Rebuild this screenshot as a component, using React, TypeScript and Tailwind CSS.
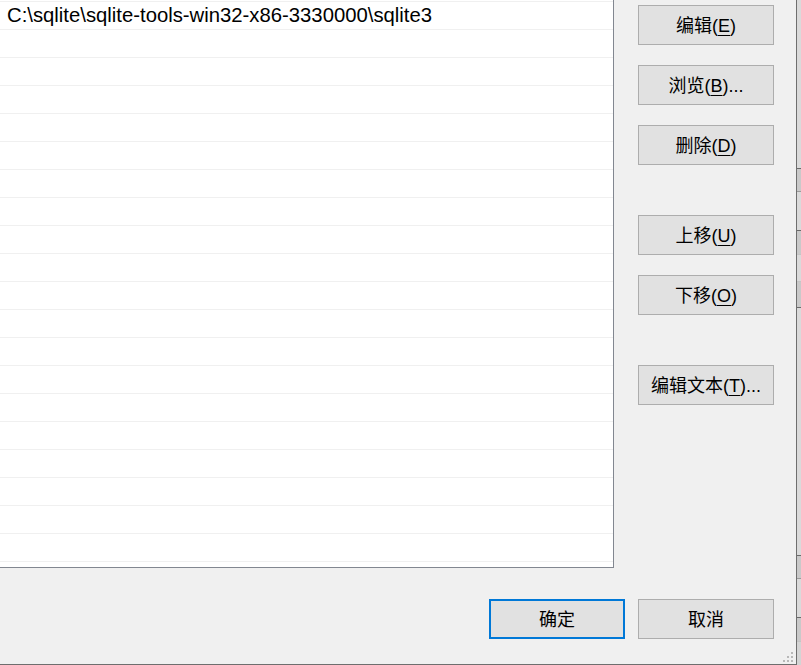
import type { ReactNode } from "react";

const font = "font-['Liberation_Sans','Noto_Sans_CJK_SC',sans-serif]";

const paths = ["C:\\sqlite\\sqlite-tools-win32-x86-3330000\\sqlite3"];

function Btn({
  children,
  focused = false,
}: {
  children: ReactNode;
  focused?: boolean;
}) {
  return (
    <button
      className={
        focused
          ? "w-[136px] h-[40px] pt-px flex items-center justify-center bg-[#e1e1e1] border-2 border-[#0078d7] text-[18px] text-black leading-none"
          : "w-[136px] h-[40px] pt-px flex items-center justify-center bg-[#e1e1e1] border border-[#adadad] text-[18px] text-black leading-none"
      }
    >
      {children}
    </button>
  );
}

function Key({ k }: { k: string }) {
  return (
    <>
      (<span className="underline underline-offset-[3px] decoration-1">{k}</span>)
    </>
  );
}

// the side of the window behind the dialog
const strip = [
  { h: 169, c: "border-[#6a6a6a]" },
  { h: 23, c: "border-[#9a9a9a]" },
  { h: 39, c: "border-[#6a6a6a]" },
  { h: 24, c: "border-[#c4c4c4]" },
  { h: 27, c: "border-[#c4c4c4]" },
  { h: 26, c: "border-[#6a6a6a]" },
  { h: 248, c: "border-[#6a6a6a]" },
  { h: 23, c: "border-[#9a9a9a]" },
  { h: 39, c: "border-[#6a6a6a]" },
  { h: 24, c: "border-[#c4c4c4]" },
];

export default function App() {
  return (
    <div className={`w-[801px] h-[665px] flex bg-[#f0f0f0] overflow-hidden ${font}`}>
      <div className="relative w-[797px] h-[665px] border-r border-b border-[#6e6e6e] flex flex-col">
        <div className="flex h-[568px]">
          {/* path list */}
          <div className="w-[614px] h-[568px] bg-white border-r border-b border-[#828790] overflow-hidden">
            <div className="h-px" />
            <div className="border-t border-[#f0f0f0]" />
            {Array.from({ length: 20 }).map((_, i) => (
              <div
                key={i}
                className="h-[28px] border-b border-[#f0f0f0] pl-[7px] flex items-center text-[20.3px] text-black leading-none"
              >
                {paths[i] ?? ""}
              </div>
            ))}
          </div>

          {/* side buttons */}
          <div className="ml-[24px] pt-[5px] flex flex-col">
            <Btn>
              编辑<Key k="E" />
            </Btn>
            <div className="h-[20px]" />
            <Btn>
              浏览<Key k="B" />...
            </Btn>
            <div className="h-[20px]" />
            <Btn>
              删除<Key k="D" />
            </Btn>
            <div className="h-[50px]" />
            <Btn>
              上移<Key k="U" />
            </Btn>
            <div className="h-[20px]" />
            <Btn>
              下移<Key k="O" />
            </Btn>
            <div className="h-[50px]" />
            <Btn>
              编辑文本<Key k="T" />...
            </Btn>
          </div>
        </div>

        {/* OK / Cancel */}
        <div className="pt-[31px] pr-[22px] flex justify-end gap-[13px]">
          <Btn focused>确定</Btn>
          <Btn>取消</Btn>
        </div>

        {/* resize grip */}
        <svg
          className="absolute right-[2px] bottom-[1px]"
          width="12"
          height="12"
          viewBox="0 0 12 12"
        >
          <g fill="#b8b8b8">
            <rect x="9" y="1" width="2" height="2" />
            <rect x="5" y="5" width="2" height="2" />
            <rect x="9" y="5" width="2" height="2" />
            <rect x="1" y="9" width="2" height="2" />
            <rect x="5" y="9" width="2" height="2" />
            <rect x="9" y="9" width="2" height="2" />
          </g>
        </svg>
      </div>

      <div className="w-[4px] h-[665px] flex flex-col bg-[#d4d4d4]">
        {strip.map((s, i) => (
          <div
            key={i}
            className={`border-b ${s.c} ${i % 2 ? "bg-[#c9c9c9]" : "bg-[#dadada]"}`}
            style={{ height: s.h }}
          />
        ))}
      </div>
    </div>
  );
}
